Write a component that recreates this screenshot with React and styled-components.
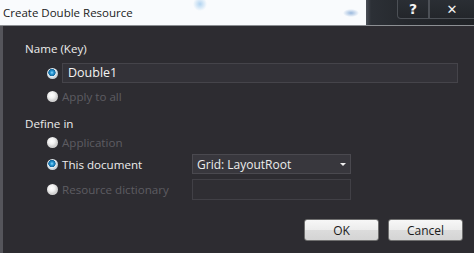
import React from 'react';
import styled, { createGlobalStyle } from 'styled-components';

const GlobalStyle = createGlobalStyle`
  html, body {
    margin: 0;
    padding: 0;
    background: #2d2c31;
  }
  body {
    font-family: "Open Sans", "Noto Sans", "Liberation Sans", sans-serif;
  }
`;

const Window = styled.div`
  width: 474px;
  height: 253px;
  display: flex;
  flex-direction: column;
  overflow: hidden;
`;

const TitleBar = styled.div`
  height: 25px;
  display: flex;
  align-items: stretch;
  border-bottom: 1px solid #8c8f93;
  background:
    radial-gradient(circle at 200px 4px, rgba(120, 180, 230, 0.55) 0, rgba(120, 180, 230, 0) 7px),
    radial-gradient(ellipse 8px 4px at 351px 13px, rgba(90, 140, 200, 0.6) 0, rgba(90, 140, 200, 0) 100%),
    #f9fbfd;
`;

const Title = styled.div`
  flex: 1;
  padding: 5px 0 0 3px;
  font-size: 11.5px;
  color: #1b1b1b;
`;

const Chrome = styled.div`
  width: 108px;
  display: flex;
  justify-content: flex-end;
  align-items: flex-start;
  background: linear-gradient(90deg, #4b5058 0, #2c3036 5px, #25282d 40px, #1f2226 100%);
`;

const CaptionButton = styled.div`
  width: ${p => p.$w}px;
  height: 18px;
  display: flex;
  align-items: center;
  justify-content: center;
  color: #f2f2f2;
  font-family: "DejaVu Sans", sans-serif;
  font-weight: bold;
  font-size: ${p => p.$size}px;
  border: 1px solid #4c5056;
  border-top: none;
  border-right: ${p => (p.$last ? 'none' : '1px solid #4c5056')};
  border-radius: ${p => (p.$last ? '0' : '0 0 0 4px')};
  background: linear-gradient(#2a2e34, #23262b);
`;

const Body = styled.div`
  flex: 1;
  border-left: 3px solid #55555b;
  padding: 13px 16px 0 22px;
  color: #ececec;
  font-size: 11.6px;
`;

const Label = styled.div`
  height: ${p => p.$h || 20}px;
  line-height: ${p => p.$h || 20}px;
  margin-top: ${p => p.$top || 0}px;
`;

const Row = styled.div`
  display: flex;
  align-items: center;
  height: ${p => p.$h || 20}px;
  margin-top: ${p => p.$top || 0}px;
  padding-left: 22px;
`;

const Choice = styled.div`
  display: flex;
  align-items: center;
  gap: 4px;
  width: ${p => (p.$w ? `${p.$w}px` : 'auto')};
  color: ${p => (p.$disabled ? '#5d5c62' : '#ececec')};
  white-space: nowrap;
`;

const Radio = styled.span`
  width: 11px;
  height: 11px;
  border-radius: 50%;
  flex: none;
  background: ${p =>
    p.$checked
      ? 'radial-gradient(circle at 45% 42%, #8fdcff 0, #2a9ad6 1.6px, #10669d 3.4px, #e6edf1 3.9px, #c6d0d6 5.5px)'
      : 'radial-gradient(circle at 42% 38%, #ffffff 0, #f2f2f2 3px, #d2d2d2 5.5px)'};
`;

const TextInput = styled.div`
  flex: 1;
  height: 18px;
  line-height: 18px;
  margin-left: 4px;
  padding-left: 5px;
  background: #333238;
  border: 1px solid #45444a;
  color: #f2f2f2;
  font-size: 12.5px;
`;

const Field = styled.div`
  width: 159px;
  height: ${p => p.$h}px;
  display: flex;
  align-items: center;
  justify-content: space-between;
  padding: 0 4px 0 4px;
  box-sizing: border-box;
  background: ${p => (p.$empty ? '#2f2e33' : '#38373d')};
  border: 1px solid ${p => (p.$empty ? '#414046' : '#4a494f')};
  color: #ececec;
  font-size: 12px;
`;

const Arrow = styled.span`
  width: 0;
  height: 0;
  border-left: 3px solid transparent;
  border-right: 3px solid transparent;
  border-top: 3px solid #f0f0f0;
`;

const Footer = styled.div`
  display: flex;
  justify-content: flex-end;
  gap: 9px;
  margin-top: 19px;
  margin-right: -5px;
`;

const Button = styled.button`
  width: 75px;
  height: 22px;
  padding: 0;
  font-family: inherit;
  font-size: 12px;
  color: #1a1a1a;
  border: 1px solid #6f6f6f;
  border-radius: 3px;
  background: linear-gradient(#f7f7f7 0, #ececec 50%, #dcdcdc 51%, #d4d4d4 100%);
`;

export default function App() {
  return (
    <Window>
      <GlobalStyle />
      <TitleBar>
        <Title>Create Double Resource</Title>
        <Chrome>
          <CaptionButton $w={30} $size={14}>?</CaptionButton>
          <CaptionButton $w={44} $size={13} $last>✕</CaptionButton>
        </Chrome>
      </TitleBar>
      <Body>
        <Label>Name (Key)</Label>
        <Row $top={4}>
          <Radio $checked />
          <TextInput>Double1</TextInput>
        </Row>
        <Row $top={3}>
          <Choice $disabled>
            <Radio $disabled />
            Apply to all
          </Choice>
        </Row>
        <Label $top={9} $h={18}>Define in</Label>
        <Row $h={18}>
          <Choice $disabled>
            <Radio $disabled />
            Application
          </Choice>
        </Row>
        <Row $top={3}>
          <Choice $w={145}>
            <Radio $checked />
            This document
          </Choice>
          <Field $h={20}>
            Grid: LayoutRoot
            <Arrow />
          </Field>
        </Row>
        <Row $top={5} $h={21}>
          <Choice $w={145} $disabled>
            <Radio $disabled />
            Resource dictionary
          </Choice>
          <Field $h={21} $empty />
        </Row>
        <Footer>
          <Button>OK</Button>
          <Button>Cancel</Button>
        </Footer>
      </Body>
    </Window>
  );
}
